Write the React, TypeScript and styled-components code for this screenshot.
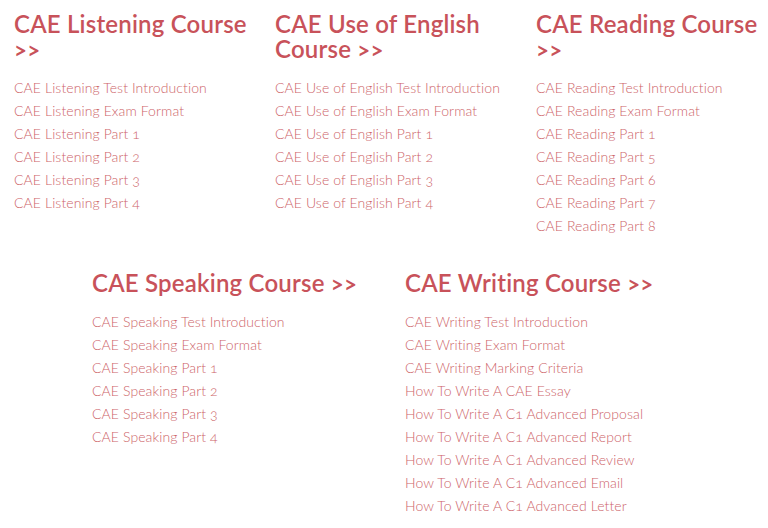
import { createGlobalStyle, styled } from 'styled-components';

type Course = {
  title: string;
  links: string[];
};

const topCourses: Course[] = [
  {
    title: 'CAE Listening Course >>',
    links: [
      'CAE Listening Test Introduction',
      'CAE Listening Exam Format',
      'CAE Listening Part 1',
      'CAE Listening Part 2',
      'CAE Listening Part 3',
      'CAE Listening Part 4',
    ],
  },
  {
    title: 'CAE Use of English Course >>',
    links: [
      'CAE Use of English Test Introduction',
      'CAE Use of English Exam Format',
      'CAE Use of English Part 1',
      'CAE Use of English Part 2',
      'CAE Use of English Part 3',
      'CAE Use of English Part 4',
    ],
  },
  {
    title: 'CAE Reading Course >>',
    links: [
      'CAE Reading Test Introduction',
      'CAE Reading Exam Format',
      'CAE Reading Part 1',
      'CAE Reading Part 5',
      'CAE Reading Part 6',
      'CAE Reading Part 7',
      'CAE Reading Part 8',
    ],
  },
];

const bottomCourses: Course[] = [
  {
    title: 'CAE Speaking Course >>',
    links: [
      'CAE Speaking Test Introduction',
      'CAE Speaking Exam Format',
      'CAE Speaking Part 1',
      'CAE Speaking Part 2',
      'CAE Speaking Part 3',
      'CAE Speaking Part 4',
    ],
  },
  {
    title: 'CAE Writing Course >>',
    links: [
      'CAE Writing Test Introduction',
      'CAE Writing Exam Format',
      'CAE Writing Marking Criteria',
      'How To Write A CAE Essay',
      'How To Write A C1 Advanced Proposal',
      'How To Write A C1 Advanced Report',
      'How To Write A C1 Advanced Review',
      'How To Write A C1 Advanced Email',
      'How To Write A C1 Advanced Letter',
    ],
  },
];

function CourseBlock({ course }: { course: Course }) {
  return (
    <St.Column>
      <St.Title href="#">{course.title}</St.Title>
      <St.LinkList>
        {course.links.map((link) => (
          <li key={link}>
            <St.Link href="#">{link}</St.Link>
          </li>
        ))}
      </St.LinkList>
    </St.Column>
  );
}

export default function App() {
  return (
    <>
      <GlobalStyle />
      <St.Page>
        <St.TopRow>
          {topCourses.map((c) => (
            <CourseBlock key={c.title} course={c} />
          ))}
        </St.TopRow>
        <St.BottomRow>
          {bottomCourses.map((c) => (
            <CourseBlock key={c.title} course={c} />
          ))}
        </St.BottomRow>
      </St.Page>
    </>
  );
}

const GlobalStyle = createGlobalStyle`
  html, body {
    margin: 0;
    padding: 0;
    background: #ffffff;
  }
  body {
    font-family: Lato, "Open Sans", "Liberation Sans", sans-serif;
    font-variant-numeric: oldstyle-nums;
  }
`;

const St = {
  Page: styled.div`
    width: 768px;
    height: 528px;
    overflow: hidden;
    padding-top: 11px;
    box-sizing: border-box;
  `,
  TopRow: styled.div`
    display: grid;
    grid-template-columns: 245px 245px 232px;
    column-gap: 16px;
    padding-left: 14px;
  `,
  BottomRow: styled.div`
    display: grid;
    grid-template-columns: repeat(2, 297px);
    column-gap: 16px;
    padding-left: 92px;
    margin-top: 33px;
  `,
  Column: styled.div`
    display: flex;
    flex-direction: column;
  `,
  Title: styled.a`
    font-size: 24px;
    line-height: 25px;
    font-weight: 600;
    letter-spacing: 0.2px;
    color: #c8525a;
    text-decoration: none;
    margin-bottom: 15px;
  `,
  LinkList: styled.ul`
    list-style: none;
    margin: 0;
    padding: 0;
  `,
  Link: styled.a`
    display: block;
    font-size: 14px;
    line-height: 23px;
    font-weight: 300;
    letter-spacing: 0.1px;
    color: #cd6469;
    text-decoration: none;
  `,
};
